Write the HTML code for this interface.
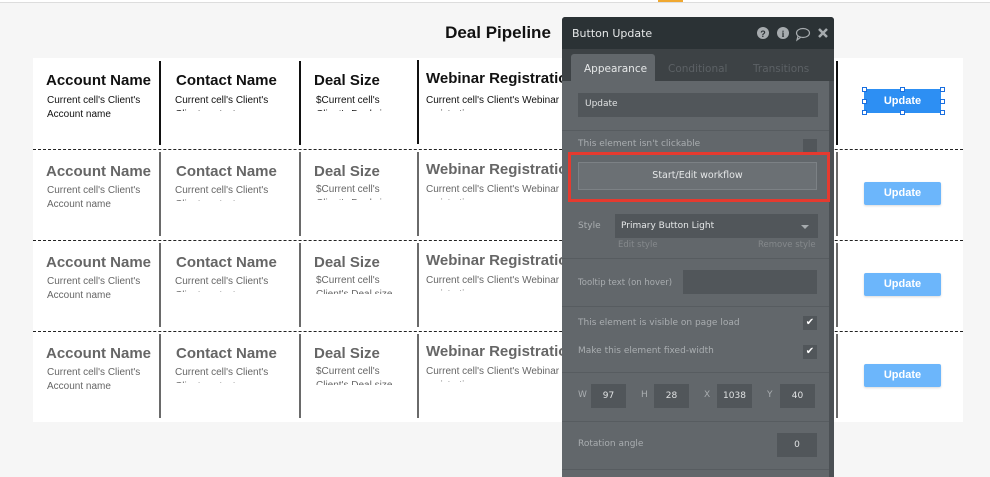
<!DOCTYPE html>
<html><head><meta charset="utf-8"><style>
*{box-sizing:border-box;margin:0;padding:0}
body{width:990px;height:471px;overflow:hidden;background:#f6f6f6;font-family:"Liberation Sans",Arial,sans-serif;position:relative}
.a{position:absolute}
.top{left:0;top:0;width:990px;height:3px;background:#fff;border-bottom:1px solid #ddd}
.card{left:33px;top:58px;width:930px;height:364px;background:#fff}
.h{position:absolute;font-weight:bold;font-size:15px;color:#111;white-space:nowrap}
.g .h{color:#666}
.s{position:absolute;font-size:10px;line-height:14px;color:#111;overflow:hidden}
.g .s{color:#666}
.row{position:absolute;left:33px;width:930px;height:91px}
.dash{position:absolute;left:0;width:930px;border-top:1px dashed #222}
.v{position:absolute;top:3px;height:84px;width:2px;background:#111}
.g .v{background:#6a6a6a}
.btn{position:absolute;left:831px;width:77px;height:23px;background:#6cb6fb;color:#fff;font-weight:bold;font-size:11px;text-align:center;line-height:23px;border-radius:2px;box-shadow:0 1px 2px rgba(0,0,0,.15)}
.p{font-family:"DejaVu Sans",sans-serif;color:#a9adb0;font-size:9px;white-space:nowrap}
.in{position:absolute;background:#51565a}
.sep{position:absolute;left:562px;width:267px;height:1px;background:#575c60}
.cb{position:absolute;left:803px;width:14px;height:14px;background:#51565a;color:#fff;font-size:10px;text-align:center;line-height:14px}
</style></head><body>
<div class="a top"></div>
<div class="a" style="left:658px;top:0;width:25px;height:2px;background:#f0a830"></div>
<div class="a card"></div>
<div class="a" style="left:0;top:23px;width:996px;text-align:center;font-weight:bold;font-size:17px;color:#111">Deal Pipeline</div>

<div class="row" style="top:58px">
 <div class="h" style="left:13px;top:14px">Account Name</div><div class="s" style="left:14px;top:36px;width:110px;height:28px">Current cell's Client's Account name</div>
 <div class="v" style="left:126px"></div>
 <div class="h" style="left:143px;top:14px">Contact Name</div><div class="s" style="left:142px;top:36px;width:120px;height:17px">Current cell's Client's Client contact name</div>
 <div class="v" style="left:266px"></div>
 <div class="h" style="left:281px;top:14px">Deal Size</div><div class="s" style="left:283px;top:36px;width:95px;height:17px">$Current cell's Client's Deal size</div>
 <div class="v" style="left:384px;width:2px;top:2px"></div>
 <div class="h" style="left:393px;top:12px">Webinar Registration</div><div class="s" style="left:393px;top:36px;width:140px;height:17px">Current cell's Client's Webinar registration</div>
 <div class="v" style="left:803px"></div>
</div>
<div class="row g" style="top:149px">
 <div class="dash" style="top:0"></div>
 <div class="h" style="left:13px;top:14px">Account Name</div><div class="s" style="left:14px;top:35px;width:110px;height:28px">Current cell's Client's Account name</div>
 <div class="v" style="left:126px"></div>
 <div class="h" style="left:143px;top:14px">Contact Name</div><div class="s" style="left:142px;top:35px;width:120px;height:17px">Current cell's Client's Client contact name</div>
 <div class="v" style="left:266px"></div>
 <div class="h" style="left:281px;top:14px">Deal Size</div><div class="s" style="left:283px;top:34px;width:95px;height:17px">$Current cell's Client's Deal size</div>
 <div class="v" style="left:384px"></div>
 <div class="h" style="left:393px;top:12px">Webinar Registration</div><div class="s" style="left:393px;top:34px;width:140px;height:17px">Current cell's Client's Webinar registration</div>
 <div class="v" style="left:803px"></div>
 <div class="btn" style="top:33px">Update</div>
</div>
<div class="row g" style="top:240px">
 <div class="dash" style="top:0"></div>
 <div class="h" style="left:13px;top:14px">Account Name</div><div class="s" style="left:14px;top:35px;width:110px;height:28px">Current cell's Client's Account name</div>
 <div class="v" style="left:126px"></div>
 <div class="h" style="left:143px;top:14px">Contact Name</div><div class="s" style="left:142px;top:35px;width:120px;height:17px">Current cell's Client's Client contact name</div>
 <div class="v" style="left:266px"></div>
 <div class="h" style="left:281px;top:14px">Deal Size</div><div class="s" style="left:283px;top:34px;width:95px;height:20px">$Current cell's Client's Deal size</div>
 <div class="v" style="left:384px"></div>
 <div class="h" style="left:393px;top:12px">Webinar Registration</div><div class="s" style="left:393px;top:34px;width:140px;height:17px">Current cell's Client's Webinar registration</div>
 <div class="v" style="left:803px"></div>
 <div class="btn" style="top:33px">Update</div>
</div>
<div class="row g" style="top:331px">
 <div class="dash" style="top:0"></div>
 <div class="h" style="left:13px;top:14px">Account Name</div><div class="s" style="left:14px;top:35px;width:110px;height:28px">Current cell's Client's Account name</div>
 <div class="v" style="left:126px"></div>
 <div class="h" style="left:143px;top:14px">Contact Name</div><div class="s" style="left:142px;top:35px;width:120px;height:17px">Current cell's Client's Client contact name</div>
 <div class="v" style="left:266px"></div>
 <div class="h" style="left:281px;top:14px">Deal Size</div><div class="s" style="left:283px;top:34px;width:95px;height:20px">$Current cell's Client's Deal size</div>
 <div class="v" style="left:384px"></div>
 <div class="h" style="left:393px;top:12px">Webinar Registration</div><div class="s" style="left:393px;top:34px;width:140px;height:17px">Current cell's Client's Webinar registration</div>
 <div class="v" style="left:803px"></div>
 <div class="btn" style="top:33px">Update</div>
</div>

<div class="a" style="left:864px;top:89px;width:77px;height:24px;background:#2d8ff3;color:#fff;font-weight:bold;font-size:11px;text-align:center;line-height:24px">Update</div>
<div class="a" style="left:862px;top:87px;width:5px;height:5px;border:1px solid #1a6fe0;background:#fff"></div>
<div class="a" style="left:900px;top:87px;width:5px;height:5px;border:1px solid #1a6fe0;background:#fff"></div>
<div class="a" style="left:940px;top:87px;width:5px;height:5px;border:1px solid #1a6fe0;background:#fff"></div>
<div class="a" style="left:862px;top:99px;width:5px;height:5px;border:1px solid #1a6fe0;background:#fff"></div>
<div class="a" style="left:940px;top:99px;width:5px;height:5px;border:1px solid #1a6fe0;background:#fff"></div>
<div class="a" style="left:862px;top:110px;width:5px;height:5px;border:1px solid #1a6fe0;background:#fff"></div>
<div class="a" style="left:900px;top:110px;width:5px;height:5px;border:1px solid #1a6fe0;background:#fff"></div>
<div class="a" style="left:940px;top:110px;width:5px;height:5px;border:1px solid #1a6fe0;background:#fff"></div>

<div class="a" style="left:562px;top:17px;width:272px;height:460px;background:#62676b;border-radius:3px 3px 0 0;overflow:hidden">
 <div class="a" style="left:0;top:0;width:272px;height:32px;background:#2b3235"></div>
 <div class="a" style="left:0;top:32px;width:272px;height:32px;background:#3d4245"></div>
 <div class="a" style="left:267px;top:64px;width:5px;height:400px;background:#4b5054"></div>
 <div class="a" style="left:9px;top:37px;width:84px;height:27px;background:#62676b;border-radius:3px 3px 0 0"></div>
</div>
<div class="a p" style="left:572px;top:27px;font-size:11px;color:#e6e8e9">Button Update</div>
<svg class="a" style="left:756px;top:26px" width="80" height="16" viewBox="0 0 80 16">
 <circle cx="7" cy="7" r="6" fill="#a6abae"/><text x="7" y="11" font-size="9" font-weight="bold" text-anchor="middle" fill="#2b3235" font-family="Liberation Sans">?</text>
 <circle cx="27" cy="7" r="6" fill="#a6abae"/><text x="27" y="11" font-size="9" font-weight="bold" text-anchor="middle" fill="#2b3235" font-family="Liberation Serif">i</text>
 <ellipse cx="47" cy="7" rx="6.5" ry="4.5" fill="none" stroke="#a6abae" stroke-width="1.2"/><path d="M42 10 L41 14 L45 11" fill="none" stroke="#a6abae" stroke-width="1.2"/>
 <path d="M63 3 L71 11 M71 3 L63 11" stroke="#a6abae" stroke-width="2.5"/>
</svg>
<div class="a p" style="left:584px;top:63px;font-size:10.5px;color:#e6e8e9">Appearance</div>
<div class="a p" style="left:668px;top:63px;font-size:10.5px;color:#5c6165">Conditional</div>
<div class="a p" style="left:753px;top:63px;font-size:10.5px;color:#5c6165">Transitions</div>
<div class="in" style="left:578px;top:93px;width:240px;height:24px"></div>
<div class="a p" style="left:585px;top:99px;color:#e0e2e3">Update</div>
<div class="sep" style="top:130px"></div>
<div class="a p" style="left:578px;top:139px">This element isn't clickable</div>
<div class="cb" style="top:139px"></div>
<div class="a" style="left:568px;top:152px;width:262px;height:50px;border:3px solid #e53a2f"></div>
<div class="a" style="left:578px;top:162px;width:239px;height:28px;background:#6b7074;border:1px solid #7c8185"></div>
<div class="a p" style="left:578px;top:170px;width:239px;text-align:center;color:#e6e8e9;font-size:9.5px">Start/Edit workflow</div>
<div class="a p" style="left:578px;top:221px">Style</div>
<div class="in" style="left:615px;top:214px;width:203px;height:24px"></div>
<div class="a p" style="left:621px;top:221px;color:#e6e8e9">Primary Button Light</div>
<div class="a" style="left:801px;top:225px;border:4px solid transparent;border-top:4px solid #a6abae"></div>
<div class="a p" style="left:618px;top:240px;font-size:8.5px;color:#85898c">Edit style</div>
<div class="a p" style="left:758px;top:240px;font-size:8.5px;color:#85898c">Remove style</div>
<div class="sep" style="top:258px"></div>
<div class="a p" style="left:578px;top:278px;font-size:8.5px">Tooltip text (on hover)</div>
<div class="in" style="left:683px;top:270px;width:134px;height:24px"></div>
<div class="sep" style="top:306px"></div>
<div class="a p" style="left:578px;top:318px">This element is visible on page load</div>
<div class="cb" style="top:316px">✔</div>
<div class="a p" style="left:578px;top:346px">Make this element fixed-width</div>
<div class="cb" style="top:345px">✔</div>
<div class="sep" style="top:372px"></div>
<div class="a p" style="left:578px;top:390px">W</div><div class="in" style="left:591px;top:384px;width:35px;height:24px"></div><div class="a p" style="left:591px;top:391px;width:35px;text-align:center;color:#e0e2e3">97</div>
<div class="a p" style="left:641px;top:390px">H</div><div class="in" style="left:654px;top:384px;width:35px;height:24px"></div><div class="a p" style="left:654px;top:391px;width:35px;text-align:center;color:#e0e2e3">28</div>
<div class="a p" style="left:704px;top:390px">X</div><div class="in" style="left:717px;top:384px;width:35px;height:24px"></div><div class="a p" style="left:717px;top:391px;width:35px;text-align:center;color:#e0e2e3">1038</div>
<div class="a p" style="left:767px;top:390px">Y</div><div class="in" style="left:780px;top:384px;width:35px;height:24px"></div><div class="a p" style="left:780px;top:391px;width:35px;text-align:center;color:#e0e2e3">40</div>
<div class="sep" style="top:421px"></div>
<div class="a p" style="left:578px;top:439px">Rotation angle</div>
<div class="in" style="left:777px;top:433px;width:40px;height:24px"></div><div class="a p" style="left:777px;top:440px;width:40px;text-align:center;color:#e0e2e3">0</div>
<div class="sep" style="top:469px"></div>
</body></html>
